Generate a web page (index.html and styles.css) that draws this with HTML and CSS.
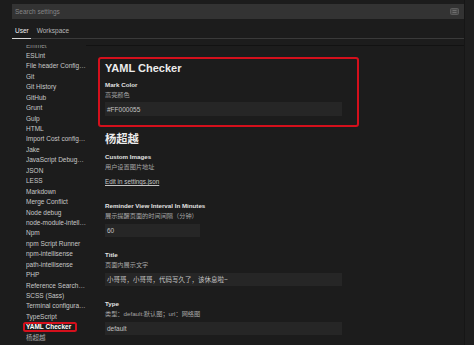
FILE: index.html
```html
<!DOCTYPE html>
<html>
<head>
<meta charset="utf-8">
<link rel="stylesheet" href="styles.css">
</head>
<body>
<div class="page">
  <div class="panel">
    <div class="search">
      <span class="placeholder">Search settings</span>
      <svg class="filter-icon" width="9" height="7" viewBox="0 0 9 7"><rect x="0.5" y="0.5" width="8" height="6" rx="1" fill="#4a4a4a" stroke="#5c5c5c"/><path d="M2.5 2.5h4M2.5 4.5h4" stroke="#777" stroke-width="0.8"/></svg>
    </div>
    <div class="tabs">
      <div class="tab active">User</div>
      <div class="tab">Workspace</div>
    </div>
    <div class="body">
      <div class="sidebar">
        <ul class="toc">
          <li>Emmet</li>
          <li>ESLint</li>
          <li>File header Configuration</li>
          <li>Git</li>
          <li>Git History</li>
          <li>GitHub</li>
          <li>Grunt</li>
          <li>Gulp</li>
          <li>HTML</li>
          <li>Import Cost configuration</li>
          <li>Jake</li>
          <li>JavaScript Debugger</li>
          <li>JSON</li>
          <li>LESS</li>
          <li>Markdown</li>
          <li>Merge Conflict</li>
          <li>Node debug</li>
          <li>node-module-intellisense</li>
          <li>Npm</li>
          <li>npm Script Runner</li>
          <li>npm-intellisense</li>
          <li>path-intellisense</li>
          <li>PHP</li>
          <li>Reference Search View</li>
          <li>SCSS (Sass)</li>
          <li>Terminal configuration</li>
          <li>TypeScript</li>
          <li class="current"><span class="mark">YAML Checker</span></li>
          <li class="dim">杨超越</li>
        </ul>
      </div>
      <div class="main">
        <div class="highlight">
          <h2 class="section">YAML Checker</h2>
          <div class="setting first">
            <div class="label">Mark Color</div>
            <div class="desc">高亮颜色</div>
            <div class="input">#FF000055</div>
          </div>
        </div>
        <h2 class="section cjk">杨超越</h2>
        <div class="setting s-images">
          <div class="label">Custom Images</div>
          <div class="desc">用户设置图片地址</div>
          <div class="link">Edit in settings.json</div>
        </div>
        <div class="setting s-reminder">
          <div class="label">Reminder View Interval In Minutes</div>
          <div class="desc">展示提醒页面的时间间隔（分钟）</div>
          <div class="input short">60</div>
        </div>
        <div class="setting">
          <div class="label">Title</div>
          <div class="desc">页面内展示文字</div>
          <div class="input">小哥哥，小哥哥，代码写久了，该休息啦~</div>
        </div>
        <div class="setting">
          <div class="label">Type</div>
          <div class="desc">类型：default:默认图；url：网络图</div>
          <div class="input">default</div>
        </div>
      </div>
    </div>
  </div>
  <div class="lane"></div>
</div>
</body>
</html>
```

FILE: styles.css
```css
* { box-sizing: border-box; }
html, body {
  margin: 0;
  padding: 0;
  height: 100%;
  overflow: hidden;
  background: #1c1c1c;
  font-family: "Liberation Sans", "Noto Sans CJK SC", sans-serif;
  color: #cccccc;
}
.page {
  display: flex;
  height: 345px;
}
.panel {
  width: 452px;
  margin-left: 12px;
  display: flex;
  flex-direction: column;
  height: 345px;
}
.lane {
  flex: 1;
  border-left: 1px solid #161616;
  background: #1e1e1e;
}
.search {
  margin-top: 4px;
  height: 15px;
  background: #333333;
  display: flex;
  align-items: center;
  justify-content: space-between;
  padding: 0 5px 0 3px;
  flex-shrink: 0;
}
.placeholder {
  font-size: 6.5px;
  color: #858585;
}
.filter-icon { display: block; }
.tabs {
  display: flex;
  height: 20px;
  border-bottom: 1px solid #3a3a3a;
  flex-shrink: 0;
}
.tab {
  height: 20px;
  padding: 8px 2px 0 3px;
  font-size: 6.5px;
  line-height: 8px;
  color: #b8b8b8;
  margin-bottom: -1px;
}
.tab + .tab { padding-left: 6px; }
.tab.active {
  color: #f0f0f0;
  border-bottom: 1px solid #d8d8d8;
}
.body {
  display: flex;
  flex: 1;
  min-height: 0;
}
.sidebar {
  width: 74px;
  margin-top: 6px;
  overflow: hidden;
  flex-shrink: 0;
}
.toc {
  list-style: none;
  margin: -4.5px 0 0 0;
  padding: 0 0 0 14px;
}
.toc li {
  font-size: 6.5px;
  line-height: 10.44px;
  height: 10.44px;
  color: #c8c8c8;
  white-space: nowrap;
  overflow: hidden;
  text-overflow: ellipsis;
}
.toc li:first-child { color: #9a9a9a; }
.toc li.current {
  overflow: visible;
}
.mark {
  display: inline-block;
  font-weight: bold;
  color: #ffffff;
  line-height: 6.6px;
  padding: 0 4px 0 1px;
  margin-left: -3px;
  border: 2px solid #d4101c;
  border-radius: 2.5px;
  vertical-align: middle;
  position: relative;
  top: -0.5px;
}
.toc li.dim { color: #a8a8a8; }
.main {
  flex: 1;
  margin-top: 6px;
  border-top: 1px solid #121212;
  padding-left: 19px;
  overflow: hidden;
}
.highlight {
  width: 261px;
  margin: 11px 0 0 -7px;
  border: 2px solid #d4101c;
  border-radius: 3px;
  padding: 2px 0 9px 5px;
}
.section {
  margin: 0;
  font-size: 11px;
  line-height: 14px;
  font-weight: bold;
  color: #ececec;
}
.section.cjk {
  margin-top: 5px;
  font-size: 11.3px;
}
.setting { margin-top: 13px; }
.setting.first { margin-top: 5px; }
.setting.s-images { margin-top: 6px; }
.setting.s-reminder { margin-top: 14px; }
.label {
  font-size: 6.2px;
  line-height: 10px;
  font-weight: bold;
  color: #e2e2e2;
}
.desc {
  font-size: 6.2px;
  line-height: 10px;
  color: #a6a6a6;
  white-space: nowrap;
}
.link {
  margin-top: 5px;
  font-size: 6.3px;
  line-height: 10px;
  color: #c4c4c4;
  text-decoration: underline;
  text-underline-offset: 1px;
}
.input {
  margin-top: 2.5px;
  width: 237px;
  height: 13.5px;
  background: #262626;
  font-size: 6.5px;
  line-height: 13.5px;
  padding-left: 2px;
  color: #c2c2c2;
  white-space: nowrap;
  overflow: hidden;
}
.first .input { height: 14px; line-height: 15px; margin-top: 2px; }
.input.short { width: 95px; }
```
